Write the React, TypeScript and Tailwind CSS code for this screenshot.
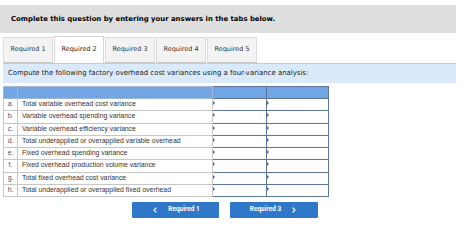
import React from 'react';
import { ChevronLeft, ChevronRight } from 'lucide-react';

const rows = [
  ['a.', 'Total variable overhead cost variance'],
  ['b.', 'Variable overhead spending variance'],
  ['c.', 'Variable overhead efficiency variance'],
  ['d.', 'Total underapplied or overapplied variable overhead'],
  ['e.', 'Fixed overhead spending variance'],
  ['f.', 'Fixed overhead production volume variance'],
  ['g.', 'Total fixed overhead cost variance'],
  ['h.', 'Total underapplied or overapplied fixed overhead'],
];

const tabs = ['Required 1', 'Required 2', 'Required 3', 'Required 4', 'Required 5'];

const InputCell: React.FC = () => (
  <td className="relative p-0 border border-[#5b7599] bg-white">
    <span className="absolute left-0 top-[2px] w-0 h-0 border-t-[2px] border-b-[2px] border-l-[2px] border-t-transparent border-b-transparent border-l-[#4a6a96]" />
  </td>
);

const App: React.FC = () => {
  return (
    <div className="w-[474px] h-[229px] bg-white pt-[5px] font-['DejaVu_Sans',sans-serif]">
      <div className="w-[456px] h-[28px] bg-[#dedede] flex items-center pl-[11px]">
        <span className="text-[6.9px] font-bold text-black">
          Complete this question by entering your answers in the tabs below.
        </span>
      </div>

      <div className="mt-[3px] ml-[3px] w-[453px]">
        <div className="flex items-end gap-[1px] h-[27px]">
          {tabs.map((t, i) => (
            <div
              key={t}
              className={
                i === 1
                  ? 'w-[50px] h-[27px] bg-white border border-b-0 border-[#d6d6d6] flex items-center justify-center text-[6.5px] text-[#222]'
                  : 'w-[50px] h-[26px] bg-[#f3f3f3] border border-[#dcdcdc] border-b-[#c8c8c8] flex items-center justify-center text-[6.5px] text-[#333]'
              }
            >
              {t}
            </div>
          ))}
        </div>
        <div className="h-[20px] bg-[#dbeafa] border-t border-[#c9c9c9] flex items-center pl-[5px] text-[6.95px] text-[#222]">
          Compute the following factory overhead cost variances using a four-variance analysis:
        </div>

        <table className="mt-[3px] border-collapse font-['Liberation_Sans',sans-serif] text-[6.9px] text-[#333]">
          <colgroup>
            <col className="w-[14px]" />
            <col className="w-[195px]" />
            <col className="w-[54px]" />
            <col className="w-[62px]" />
          </colgroup>
          <thead>
            <tr className="h-[12px] bg-[#71a5e3]">
              <th className="border border-[#9fb8d6]" />
              <th className="border border-[#9fb8d6]" />
              <th className="border border-[#5b7599]" />
              <th className="border border-[#5b7599]" />
            </tr>
          </thead>
          <tbody>
            {rows.map(([l, t]) => (
              <tr key={l} className="h-[12.25px]">
                <td className="border border-[#c6c6c6] text-center text-[#555] p-0 leading-none">{l}</td>
                <td className="border border-[#c6c6c6] pl-[4px] p-0 leading-none whitespace-nowrap">{t}</td>
                <InputCell />
                <InputCell />
              </tr>
            ))}
          </tbody>
        </table>

        <div className="flex gap-[11px] ml-[129px] mt-[5px] font-['Roboto',sans-serif]">
          <button className="w-[87px] h-[16px] bg-[#2f78c9] text-white text-[6.5px] font-bold flex items-center justify-center gap-[9px] rounded-[1px]">
            <ChevronLeft size={8} strokeWidth={3.5} />
            <span>Required 1</span>
          </button>
          <button className="w-[88px] h-[16px] bg-[#2f78c9] text-white text-[6.5px] font-bold flex items-center justify-center gap-[9px] rounded-[1px]">
            <span>Required 3</span>
            <ChevronRight size={8} strokeWidth={3.5} />
          </button>
        </div>
      </div>
    </div>
  );
};

export default App;
